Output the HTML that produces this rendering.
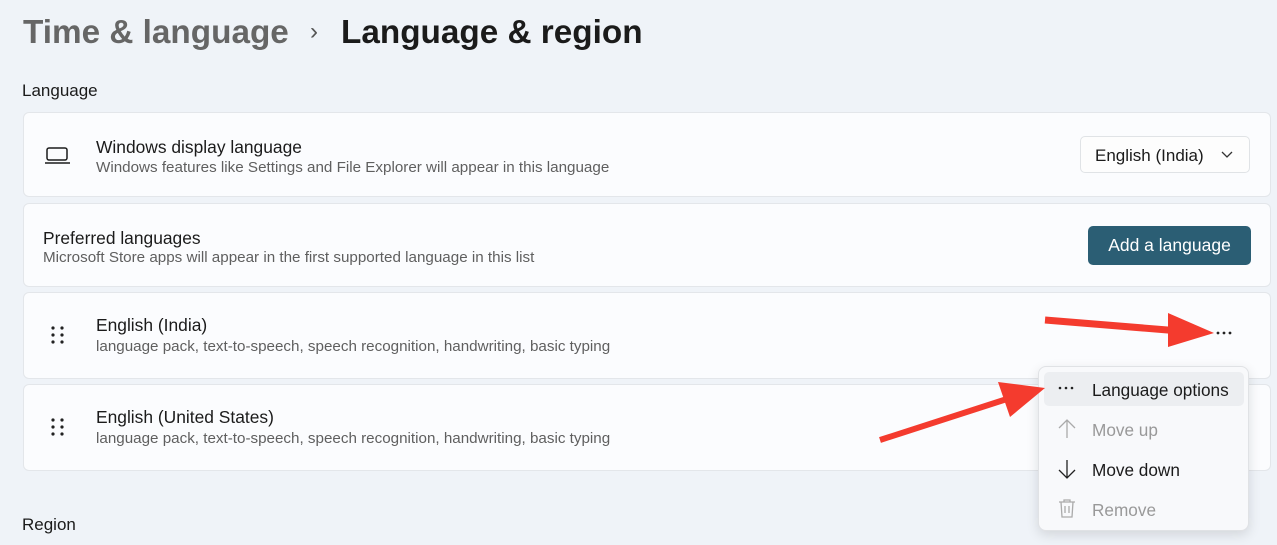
<!DOCTYPE html>
<html><head><style>
body{margin:0;width:1277px;height:545px;overflow:hidden;background:#eff3f8;font-family:"Liberation Sans",sans-serif;color:#1b1b1b;position:relative}
.a{position:absolute}
.card{position:absolute;left:23px;width:1248px;background:#fbfcfe;border:1px solid #e3e6ea;border-radius:6px;box-sizing:border-box}
.t{font-size:17.4px;color:#1b1b1b}
.s{font-size:15.2px;color:#5f5f5f}
.dots{position:absolute;width:16px;height:22px}
.mi{position:absolute;left:1092px;font-size:17.2px}
</style></head><body>
<div class="a" style="left:23px;top:14px;font-size:33.3px;font-weight:bold;color:#666">Time &amp; language</div>
<div class="a" style="left:310px;top:18px;font-size:24px;color:#555">›</div>
<div class="a" style="left:341px;top:14px;font-size:33.3px;font-weight:bold;color:#1b1b1b">Language &amp; region</div>
<div class="a" style="left:22px;top:81px;font-size:17px">Language</div>

<div class="card" style="top:112px;height:85px"></div>
<svg class="a" style="left:45px;top:146px" width="26" height="20"><rect x="2" y="2" width="20" height="12" rx="2" fill="none" stroke="#1b1b1b" stroke-width="1.5"/><line x1="0" y1="17" x2="25" y2="17" stroke="#1b1b1b" stroke-width="1.5"/></svg>
<div class="a t" style="left:96px;top:137px">Windows display language</div>
<div class="a s" style="left:96px;top:159px">Windows features like Settings and File Explorer will appear in this language</div>
<div class="a" style="left:1080px;top:136px;width:170px;height:37px;box-sizing:border-box;border:1px solid #e0e3e6;border-radius:5px;background:#fdfdfd"></div>
<div class="a" style="left:1095px;top:146px;font-size:17px">English (India)</div>
<svg class="a" style="left:1220px;top:150px" width="14" height="10"><path d="M2 2 L7 7 L12 2" fill="none" stroke="#333" stroke-width="1.3"/></svg>

<div class="card" style="top:203px;height:84px"></div>
<div class="a t" style="left:43px;top:228px">Preferred languages</div>
<div class="a s" style="left:43px;top:249px">Microsoft Store apps will appear in the first supported language in this list</div>
<div class="a" style="left:1088px;top:226px;width:163px;height:39px;background:#2b5e74;border-radius:5px;color:#fff;font-size:17.5px;text-align:center;line-height:39px">Add a language</div>

<div class="card" style="top:292px;height:87px"></div>
<svg class="dots" style="left:50px;top:325px"><g fill="#222"><circle cx="3" cy="3" r="1.6"/><circle cx="12" cy="3" r="1.6"/><circle cx="3" cy="10" r="1.6"/><circle cx="12" cy="10" r="1.6"/><circle cx="3" cy="17" r="1.6"/><circle cx="12" cy="17" r="1.6"/></g></svg>
<div class="a t" style="left:96px;top:315px">English (India)</div>
<div class="a s" style="left:96px;top:338px">language pack, text-to-speech, speech recognition, handwriting, basic typing</div>
<svg class="a" style="left:1215px;top:330px" width="20" height="6"><g fill="#222"><circle cx="3" cy="3" r="1.4"/><circle cx="9" cy="3" r="1.4"/><circle cx="15" cy="3" r="1.4"/></g></svg>

<div class="card" style="top:384px;height:87px"></div>
<svg class="dots" style="left:50px;top:417px"><g fill="#222"><circle cx="3" cy="3" r="1.6"/><circle cx="12" cy="3" r="1.6"/><circle cx="3" cy="10" r="1.6"/><circle cx="12" cy="10" r="1.6"/><circle cx="3" cy="17" r="1.6"/><circle cx="12" cy="17" r="1.6"/></g></svg>
<div class="a t" style="left:96px;top:407px">English (United States)</div>
<div class="a s" style="left:96px;top:430px">language pack, text-to-speech, speech recognition, handwriting, basic typing</div>

<div class="a" style="left:22px;top:515px;font-size:17px">Region</div>

<div class="a" style="left:1038px;top:366px;width:211px;height:165px;background:#f8f9fb;border:1px solid #e0e2e5;border-radius:8px;box-shadow:0 4px 12px rgba(0,0,0,.12);box-sizing:border-box"></div>
<div class="a" style="left:1044px;top:372px;width:200px;height:34px;background:#eceef1;border-radius:5px"></div>
<svg class="a" style="left:1057px;top:385px" width="20" height="6"><g fill="#222"><circle cx="3" cy="3" r="1.3"/><circle cx="9" cy="3" r="1.3"/><circle cx="15" cy="3" r="1.3"/></g></svg>
<div class="mi" style="top:380px">Language options</div>
<svg class="a" style="left:1056px;top:418px" width="22" height="22"><path d="M11 20V2 M3 10 L11 2 L19 10" fill="none" stroke="#aaa" stroke-width="1.3"/></svg>
<div class="mi" style="top:420px;color:#999">Move up</div>
<svg class="a" style="left:1056px;top:458px" width="22" height="22"><path d="M11 2V20 M3 12 L11 20 L19 12" fill="none" stroke="#222" stroke-width="1.3"/></svg>
<div class="mi" style="top:460px">Move down</div>
<svg class="a" style="left:1057px;top:498px" width="20" height="22"><path d="M2 4H18 M7 4V2H13V4 M4 4L5 19H15L16 4 M8 8V15 M12 8V15" fill="none" stroke="#aaa" stroke-width="1.3"/></svg>
<div class="mi" style="top:500px;color:#999">Remove</div>

<svg class="a" style="left:0;top:0" width="1277" height="545">
<g fill="#f43b2e" stroke="#f43b2e">
<line x1="1045" y1="320" x2="1180" y2="331" stroke-width="7"/>
<polygon points="1168,313 1214,333 1168,347" stroke="none"/>
<line x1="880" y1="440" x2="1010" y2="398" stroke-width="6"/>
<polygon points="998,382 1045,388 1010,417" stroke="none"/>
</g>
</svg>
</body></html>
